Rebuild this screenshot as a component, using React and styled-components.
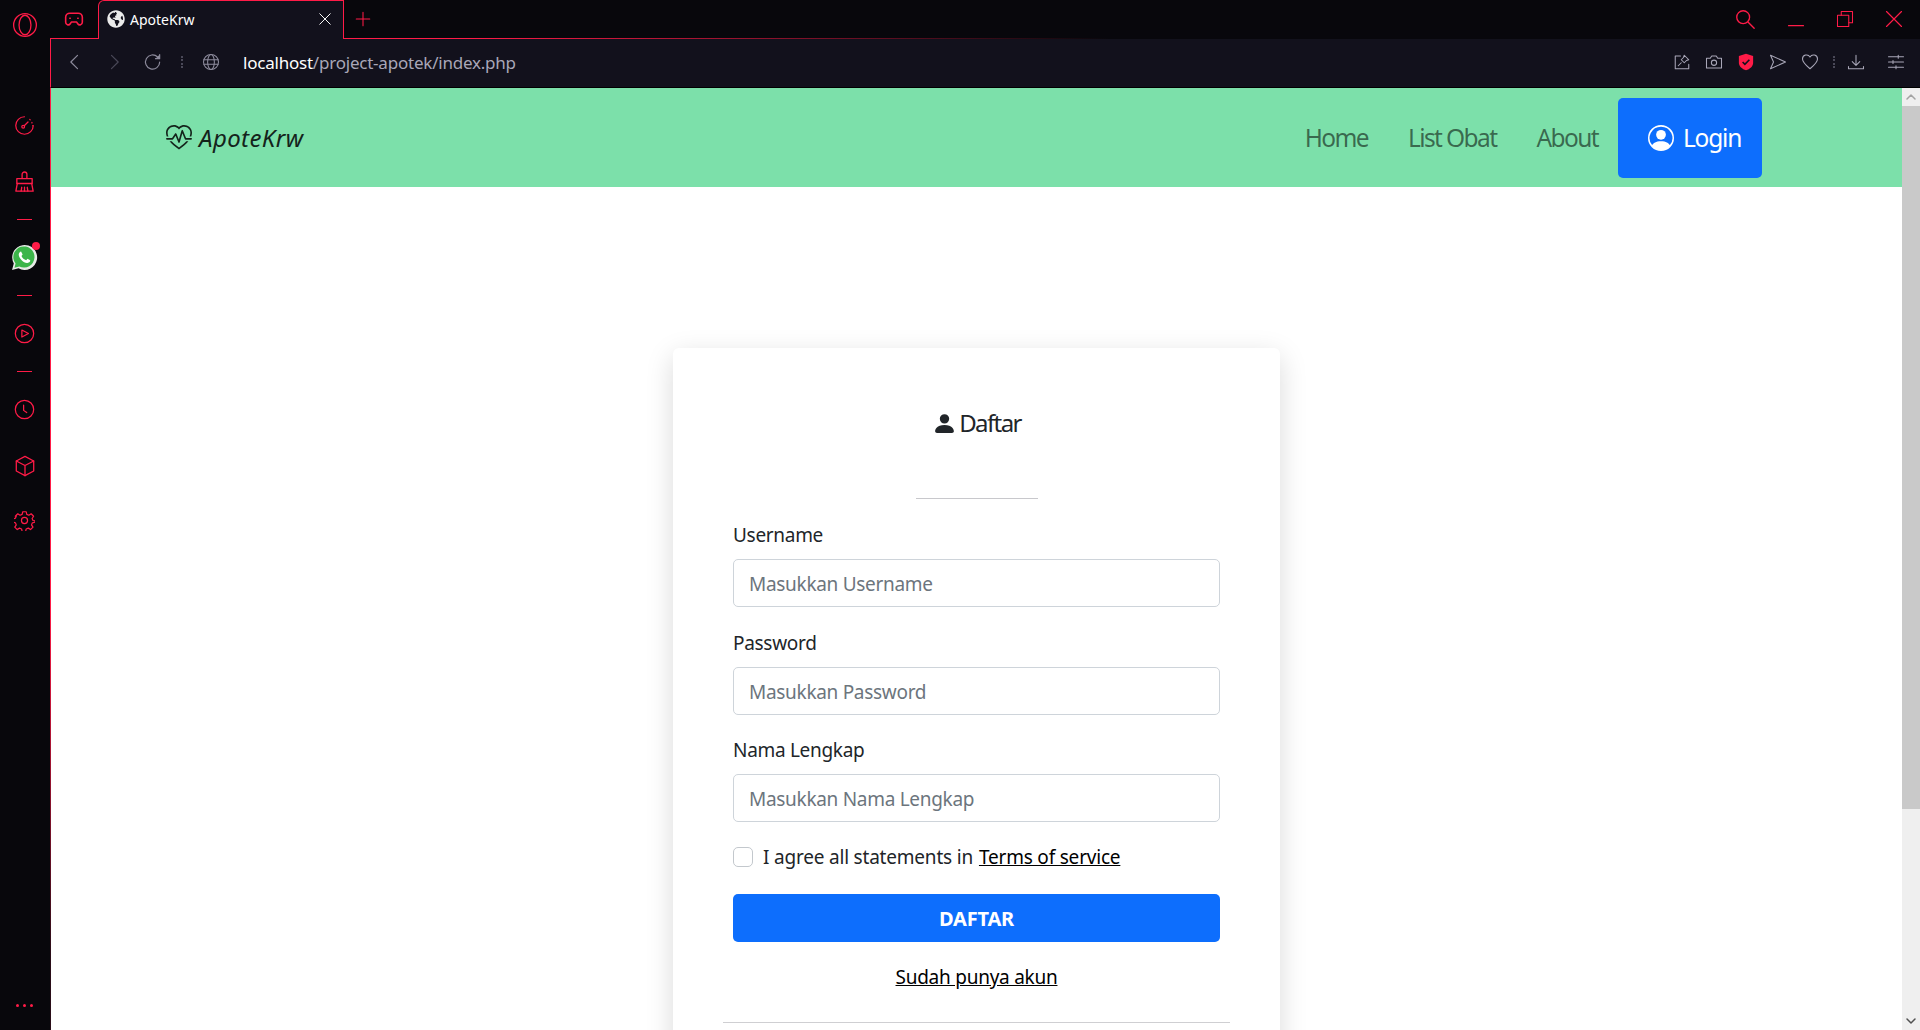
import React from 'react';
import styled, { createGlobalStyle } from 'styled-components';
import { BsHeartPulse, BsPersonCircle, BsPersonFill } from 'react-icons/bs';
import { FaGlobeAmericas } from 'react-icons/fa';

const RED = '#ff1b47';

const GlobalStyle = createGlobalStyle`
  html, body {
    margin: 0;
    height: 100%;
    overflow: hidden;
    background: #08070c;
  }
  * { box-sizing: border-box; }
  body { font-family: "Noto Sans", "Open Sans", sans-serif; }
`;

const Shell = styled.div`
  display: grid;
  grid-template-columns: 51px 1fr;
  height: 1030px;
  background: #08070c;
`;

const Rail = styled.aside`
  display: flex;
  flex-direction: column;
  align-items: center;
  padding: 13px 2px 0 0;
  color: ${RED};
`;

const RailIcon = styled.div`
  width: 24px;
  height: 24px;
  margin-top: ${p => p.$top || 0}px;
  position: relative;
  display: flex;
  align-items: center;
  justify-content: center;
  svg { flex: none; }
`;

const RailRule = styled.div`
  width: 15px;
  height: 1px;
  background: ${RED};
  margin-top: ${p => p.$top}px;
`;

const Badge = styled.span`
  position: absolute;
  top: -3px;
  right: -3px;
  width: 8px;
  height: 8px;
  border-radius: 50%;
  background: ${RED};
`;

const RailDots = styled.div`
  margin-top: auto;
  margin-bottom: 23px;
  display: flex;
  gap: 4px;
  span {
    width: 3px;
    height: 3px;
    border-radius: 50%;
    background: ${RED};
  }
`;

const Column = styled.div`
  display: flex;
  flex-direction: column;
  min-width: 0;
  height: 1030px;
`;

const TabBar = styled.div`
  height: 39px;
  display: flex;
  align-items: stretch;
  color: ${RED};
  margin-left: -1px;
  position: relative;
  &::after {
    content: "";
    position: absolute;
    left: 0;
    right: 0;
    bottom: 0;
    height: 1px;
    background: linear-gradient(to right, ${RED} 0, ${RED} 420px, transparent 1060px);
  }
`;

const GameTab = styled.div`
  width: 48px;
  display: flex;
  align-items: center;
  justify-content: center;
  padding-bottom: 2px;
`;

const Tab = styled.div`
  width: 246px;
  height: 39px;
  position: relative;
  z-index: 1;
  background: #12111c;
  border: 1px solid ${RED};
  border-bottom: none;
  border-top-left-radius: 6px;
  display: flex;
  align-items: center;
  padding: 0 9px 2px 8px;
  color: #fff;
  font-size: 14px;
`;

const TabTitle = styled.span`
  margin-left: 5px;
  flex: 1;
`;

const NewTab = styled.div`
  width: 38px;
  display: flex;
  align-items: center;
  justify-content: center;
  padding-bottom: 2px;
`;

const WindowControls = styled.div`
  margin-left: auto;
  display: flex;
  align-items: center;
  gap: 30px;
  padding: 0 16px 2px 0;
`;

const ToolBar = styled.div`
  height: 49px;
  background: #12111c;
  border-left: 1px solid ${RED};
  margin-left: -1px;
  border-bottom: 1px solid #000;
  display: flex;
  align-items: center;
  padding: 0 15px 2px 14px;
  color: #8d8b9c;
`;

const NavBtn = styled.div`
  width: ${p => p.$w}px;
  display: flex;
  align-items: center;
  justify-content: ${p => p.$center ? 'center' : 'flex-start'};
  color: ${p => p.$off ? '#4a4958' : 'inherit'};
  margin-left: ${p => p.$left || 0}px;
`;

const Address = styled.div`
  margin-left: 17px;
  font-size: 17px;
  color: #a9a7b8;
  letter-spacing: -0.22px;
  b { font-weight: 400; color: #fff; }
`;

const ToolIcons = styled.div`
  margin-left: auto;
  display: flex;
  align-items: center;
  gap: 14px;
  color: #a9a7b8;
  svg:last-child { margin-left: 8px; }
`;

const Sep = styled.div`
  width: 2px;
  height: 12px;
  border-left: 2px dotted #4a4958;
  margin: 0 -2px 0 0;
`;

const Viewport = styled.div`
  flex: 1;
  min-height: 0;
  display: flex;
  background: #fff;
  border-left: 1px solid;
  border-image: linear-gradient(to bottom, ${RED} 55%, #2a0d18 92%) 1;
  margin-left: -1px;
`;

const Page = styled.main`
  flex: 1;
  min-width: 0;
  overflow: hidden;
  font-size: 19px;
  color: #212529;
`;

const Navbar = styled.nav`
  height: 99px;
  background: #7ce0aa;
  display: flex;
  align-items: center;
  padding: 0 140px 0 115px;
`;

const Brand = styled.a`
  display: flex;
  align-items: center;
  font-size: 24px;
  font-style: italic;
  color: #14231b;
  gap: 7px;
  letter-spacing: 0.4px;
`;

const NavLinks = styled.div`
  margin-left: auto;
  display: flex;
  align-items: center;
  gap: 40px;
`;

const NavLink = styled.a`
  font-size: 24.5px;
  color: rgba(0, 0, 0, 0.55);
  letter-spacing: -1.6px;
`;

const LoginButton = styled.a`
  width: 144px;
  height: 80px;
  margin-left: -20px;
  padding-left: 9px;
  border-radius: 5px;
  background: #0d6efd;
  color: #fff;
  font-size: 24.5px;
  letter-spacing: -1.2px;
  display: flex;
  align-items: center;
  justify-content: center;
  gap: 9px;
`;

const CardWrap = styled.div`
  display: flex;
  justify-content: center;
  padding-top: 161px;
`;

const Card = styled.section`
  width: 607px;
  height: 800px;
  background: #fff;
  border-radius: 6px;
  box-shadow: 0 8px 28px rgba(0, 0, 0, 0.15);
  padding: 0 60px;
  display: flex;
  flex-direction: column;
`;

const CardTitle = styled.h3`
  margin: 59px 0 0;
  font-size: 24px;
  font-weight: 400;
  letter-spacing: -1.6px;
  line-height: 32px;
  display: flex;
  align-items: center;
  justify-content: center;
  gap: 2px;
`;

const ShortRule = styled.div`
  width: 122px;
  height: 1px;
  background: #c8c8cc;
  align-self: center;
  margin-top: 59px;
`;

const Field = styled.div`
  margin-top: ${p => p.$top}px;
`;

const Label = styled.label`
  display: block;
  line-height: 28px;
  font-size: 19px;
  letter-spacing: -0.3px;
  margin-bottom: 10px;
`;

const Input = styled.input`
  display: block;
  width: 100%;
  height: 48px;
  border: 1px solid #ced4da;
  border-radius: 5px;
  padding: 2px 15px 0;
  font: inherit;
  letter-spacing: -0.3px;
  &::placeholder { color: #6c757d; opacity: 1; }
`;

const CheckRow = styled.div`
  display: flex;
  align-items: center;
  margin-top: 21px;
  height: 28px;
  letter-spacing: -0.2px;
`;

const Box = styled.span`
  width: 20px;
  height: 20px;
  border: 1px solid #c3c8cd;
  border-radius: 5px;
  margin-right: 10px;
`;

const TextLink = styled.a`
  color: #000;
  text-decoration: underline;
  margin-left: ${p => p.$left || 0}px;
`;

const SubmitButton = styled.button`
  margin-top: 23px;
  height: 48px;
  border: 0;
  border-radius: 5px;
  background: #0d6efd;
  color: #fff;
  font: inherit;
  font-size: 20px;
  font-weight: 700;
  letter-spacing: -0.2px;
`;

const CenterLine = styled.div`
  text-align: center;
  margin-top: 21px;
  line-height: 28px;
  letter-spacing: -0.25px;
`;

const WideRule = styled.div`
  height: 1px;
  background: #cfcfd2;
  margin: 31px -10px 0;
`;

const Scrollbar = styled.div`
  width: 18px;
  flex: none;
  display: flex;
  flex-direction: column;
  background: #efefef;
`;

const ScrollArrow = styled.div`
  height: 18px;
  flex: none;
  display: flex;
  align-items: center;
  justify-content: center;
  color: ${p => p.$dark ? '#505050' : '#a3a3a3'};
`;

const ScrollThumb = styled.div`
  height: 703px;
  background: #c9c9c9;
`;

const ScrollRest = styled.div`
  flex: 1;
`;

const Line = ({ size = 18, children, sw = 1.4, vb = 24 }) => (
  <svg width={size} height={size} viewBox={`0 0 ${vb} ${vb}`} fill="none" stroke="currentColor" strokeWidth={sw} strokeLinecap="round" strokeLinejoin="round">
    {children}
  </svg>
);

const App = () => (
  <>
    <GlobalStyle />
    <Shell>
      <Rail>
        <RailIcon>
          <Line size={26} sw={1.2}>
            <circle cx="12" cy="12" r="10.5" />
            <ellipse cx="12" cy="12" rx="5.5" ry="9" />
          </Line>
        </RailIcon>
        <RailIcon $top={76}>
          <Line size={21}>
            <path d="M12 2a10 10 0 1 0 10 10" />
            <circle cx="10.5" cy="13.5" r="1.6" />
            <path d="M12 12l4-4" />
            <path d="M18 5l.5.5M20.5 8.5v.5M21.5 12v.2" />
          </Line>
        </RailIcon>
        <RailIcon $top={33}>
          <Line size={23}>
            <path d="M9.5 7V3.5a2.5 2.5 0 0 1 5 0V7" />
            <path d="M4 8h16v5H4z" />
            <path d="M4.5 13L3 21h18l-1.5-8" />
            <path d="M8.5 21l.6-4M12 21v-4M15.5 21l-.6-4" />
          </Line>
        </RailIcon>
        <RailRule $top={25} />
        <RailIcon $top={25}>
          <svg width="27" height="27" viewBox="0 0 26 26">
            <path d="M1 25l1.7-6.2A12 12 0 1 1 7.300 23.400z" fill="#e8ebe8" />
            <path d="M3.300 22.800l1.100-4A10.200 10.200 0 1 1 8 21.700z" fill="#3cb54a" />
            <path d="M9.700 7.300c-.5 0-1.100.2-1.500.8-.6.800-.9 1.700-.7 2.800.4 2 1.500 3.500 3 4.900 1.300 1.200 3 2.200 4.900 2.500 1.100.1 2.100-.3 2.700-1.100.4-.5.500-1.100.400-1.600l-2.600-1.300c-.4.400-.8 1.100-1.300 1.300-1.900-.6-3.700-2.200-4.500-4.100.2-.5.900-.8 1.100-1.300z" fill="#fff" />
          </svg>
          <Badge />
        </RailIcon>
        <RailRule $top={26} />
        <RailIcon $top={25}>
          <Line size={21}>
            <circle cx="12" cy="12" r="10.500" />
            <path d="M9 8l7.500 4L9 16z" />
          </Line>
        </RailIcon>
        <RailRule $top={26} />
        <RailIcon $top={25}>
          <Line size={21}>
            <circle cx="12" cy="12" r="10.500" />
            <path d="M11 7v6l3.500 2.500" />
          </Line>
        </RailIcon>
        <RailIcon $top={33}>
          <Line size={22}>
            <path d="M12 1.500l9.500 5v11l-9.500 5-9.500-5v-11z" />
            <path d="M2.500 6.500l9.500 5 9.500-5M12 11.500v11" />
          </Line>
        </RailIcon>
        <RailIcon $top={30}>
          <Line size={21}>
            <circle cx="12" cy="12" r="3.500" />
            <path d="M10 2h4l.6 3 2.400 1 2.600-1.700 2.800 2.800L20.700 9.700l1 2.300 2.300.6v0-.6 2l-3 .6-1 2.400 1.700 2.600-2.800 2.800-2.600-1.700-2.400 1-.6 3h-4l-.6-3-2.400-1-2.600 1.700-2.800-2.800 1.700-2.600-1-2.400-3-.6v-4l3-.6 1-2.400L1.500 7.100l2.800-2.800L6.900 6l2.400-1z" />
          </Line>
        </RailIcon>
        <RailDots><span /><span /><span /></RailDots>
      </Rail>
      <Column>
        <TabBar>
          <GameTab>
            <Line size={20} sw={1.9}>
              <path d="M7 5h10a5 5 0 0 1 5 5v6a3 3 0 0 1-5.500 1.700L15 15.500H9l-1.500 2.200A3 3 0 0 1 2 16v-6a5 5 0 0 1 5-5z" />
              <path d="M7 11h.5M16.500 11h.5" />
            </Line>
          </GameTab>
          <Tab>
            <FaGlobeAmericas size={18} color="#ebebeb" />
            <TabTitle>ApoteKrw</TabTitle>
            <Line size={18} sw={1.300}><path d="M5 5l14 14M19 5L5 19" /></Line>
          </Tab>
          <NewTab>
            <Line size={18}><path d="M12 3v18M3 12h18" /></Line>
          </NewTab>
          <WindowControls>
            <Line size={22} sw={1.500}>
              <circle cx="10" cy="10" r="7" />
              <path d="M15.500 15.500L22 22" />
            </Line>
            <Line size={20}><path d="M3 20h18" /></Line>
            <Line size={18}>
              <path d="M2 7h15v15H2z" />
              <path d="M7 7V2h15v15h-5" />
            </Line>
            <Line size={20}><path d="M3 3l18 18M21 3L3 21" /></Line>
          </WindowControls>
        </TabBar>
        <ToolBar>
          <NavBtn $w={39}>
            <Line size={20}><path d="M15 4l-8 8 8 8" /></Line>
          </NavBtn>
          <NavBtn $w={39} $off>
            <Line size={20}><path d="M9 4l8 8-8 8" /></Line>
          </NavBtn>
          <NavBtn $w={38}>
            <Line size={20}>
              <path d="M20 12a8.500 8.500 0 1 1-2.500-6" />
              <path d="M20 3v5h-5" fill="currentColor" />
            </Line>
          </NavBtn>
          <Sep />
          <NavBtn $w={30} $center $left={15}>
            <Line size={18}>
              <circle cx="12" cy="12" r="10" />
              <ellipse cx="12" cy="12" rx="4.500" ry="10" />
              <path d="M2.500 9h19M2.500 15h19" />
            </Line>
          </NavBtn>
          <Address><b>localhost</b>/project-apotek/index.php</Address>
          <ToolIcons>
            <Line size={18}>
              <path d="M10 4H3v17h18v-6" />
              <path d="M15 3l6 6-3 1-3 3-4-4 3-3zM11 13l-4 4" />
            </Line>
            <Line size={18}>
              <path d="M2 7h5l2-3h6l2 3h5v13H2z" />
              <circle cx="12" cy="13" r="3.500" />
            </Line>
            <svg width="18" height="18" viewBox="0 0 24 24">
              <path d="M12 1l9.500 3v9c0 5-4.500 8.500-9.500 10-5-1.500-9.500-5-9.500-10V4z" fill={RED} />
              <path d="M7.500 12l3 3 6-6" stroke="#12111c" strokeWidth="2.200" fill="none" />
            </svg>
            <Line size={18}><path d="M2 3l20 9-20 9 4-9z" /></Line>
            <Line size={18}>
              <path d="M12 21C6 16 2 12.500 2 8a5.300 5.300 0 0 1 10-2.500A5.300 5.300 0 0 1 22 8c0 4.500-4 8-10 13z" />
            </Line>
            <Sep />
            <Line size={18}>
              <path d="M12 3v13M7 11.500l5 5 5-5M2 18v3h20v-3" />
            </Line>
            <Line size={18}>
              <path d="M2 5h20M2 12h20M2 19h20M15 3v4M8 10v4M12 17v4" />
            </Line>
          </ToolIcons>
        </ToolBar>
        <Viewport>
          <Page>
            <Navbar>
              <Brand>
                <BsHeartPulse size={26} />
                ApoteKrw
              </Brand>
              <NavLinks>
                <NavLink>Home</NavLink>
                <NavLink>List Obat</NavLink>
                <NavLink>About</NavLink>
                <LoginButton><BsPersonCircle size={26} />Login</LoginButton>
              </NavLinks>
            </Navbar>
            <CardWrap>
              <Card>
                <CardTitle><BsPersonFill size={25} />Daftar</CardTitle>
                <ShortRule />
                <Field $top={22}>
                  <Label>Username</Label>
                  <Input placeholder="Masukkan Username" />
                </Field>
                <Field $top={22}>
                  <Label>Password</Label>
                  <Input placeholder="Masukkan Password" />
                </Field>
                <Field $top={21}>
                  <Label>Nama Lengkap</Label>
                  <Input placeholder="Masukkan Nama Lengkap" />
                </Field>
                <CheckRow>
                  <Box />
                  I agree all statements in<TextLink $left={6}>Terms of service</TextLink>
                </CheckRow>
                <SubmitButton>DAFTAR</SubmitButton>
                <CenterLine><TextLink>Sudah punya akun</TextLink></CenterLine>
                <WideRule />
              </Card>
            </CardWrap>
          </Page>
          <Scrollbar>
            <ScrollArrow>
              <Line size={12} sw={3}><path d="M4 16l8-8 8 8" /></Line>
            </ScrollArrow>
            <ScrollThumb />
            <ScrollRest />
            <ScrollArrow $dark>
              <Line size={12} sw={3}><path d="M4 8l8 8 8-8" /></Line>
            </ScrollArrow>
          </Scrollbar>
        </Viewport>
      </Column>
    </Shell>
  </>
);

export default App;
